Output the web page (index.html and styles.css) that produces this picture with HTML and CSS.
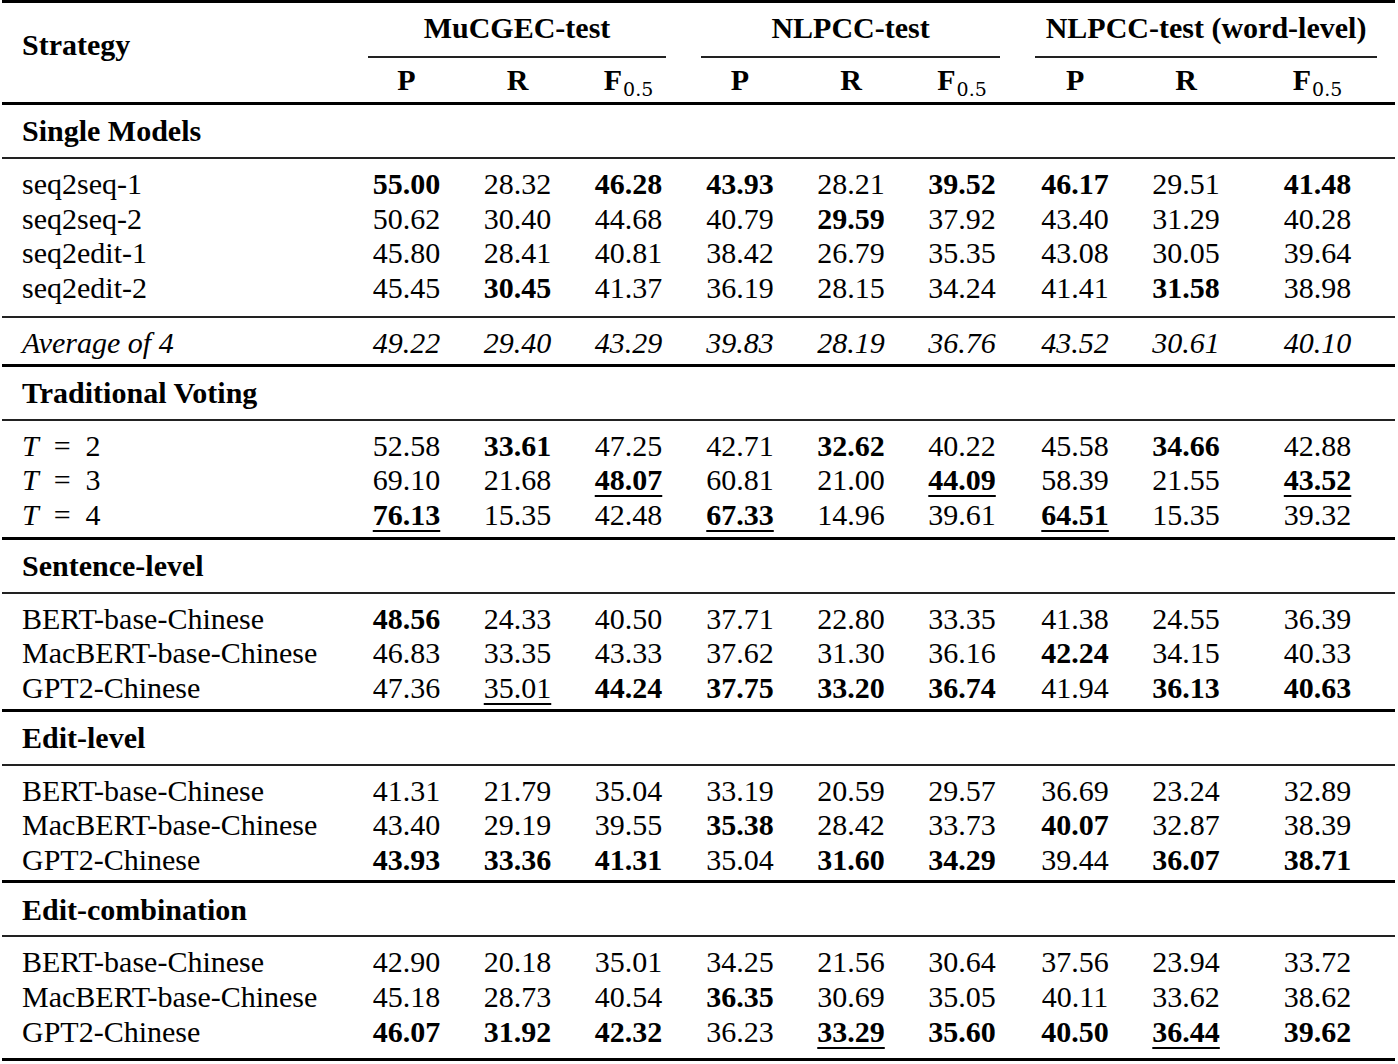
FILE: index.html
```html
<!DOCTYPE html>
<html lang="en">
<head>
    <meta charset="UTF-8">
    <meta name="viewport" content="width=device-width, initial-scale=1.0">
    <title>Ensemble Results</title>
    <link rel="stylesheet" href="styles.css">
</head>
<body>
    <table class="results">
        <colgroup>
            <col class="c-name">
            <col class="c-111"><col class="c-111"><col class="c-111">
            <col class="c-112"><col class="c-110"><col class="c-112">
            <col class="c-114"><col class="c-108"><col class="c-last">
        </colgroup>
        <thead>
            <tr class="head-1">
                <th rowspan="2" class="name strategy">Strategy</th>
                <th colspan="3"><div class="cmid">MuCGEC-test</div></th>
                <th colspan="3"><div class="cmid">NLPCC-test</div></th>
                <th colspan="3"><div class="cmid">NLPCC-test (word-level)</div></th>
            </tr>
            <tr class="head-2">
                <th>P</th><th>R</th><th>F<sub>0.5</sub></th>
                <th>P</th><th>R</th><th>F<sub>0.5</sub></th>
                <th>P</th><th>R</th><th>F<sub>0.5</sub></th>
            </tr>
        </thead>
        <tbody>
            <tr class="section"><td colspan="10" class="name">Single Models</td></tr>
            <tr class="first">
                <td class="name">seq2seq-1</td>
                <td><b>55.00</b></td><td>28.32</td><td><b>46.28</b></td>
                <td><b>43.93</b></td><td>28.21</td><td><b>39.52</b></td>
                <td><b>46.17</b></td><td>29.51</td><td><b>41.48</b></td>
            </tr>
            <tr>
                <td class="name">seq2seq-2</td>
                <td>50.62</td><td>30.40</td><td>44.68</td>
                <td>40.79</td><td><b>29.59</b></td><td>37.92</td>
                <td>43.40</td><td>31.29</td><td>40.28</td>
            </tr>
            <tr>
                <td class="name">seq2edit-1</td>
                <td>45.80</td><td>28.41</td><td>40.81</td>
                <td>38.42</td><td>26.79</td><td>35.35</td>
                <td>43.08</td><td>30.05</td><td>39.64</td>
            </tr>
            <tr class="last thin">
                <td class="name">seq2edit-2</td>
                <td>45.45</td><td><b>30.45</b></td><td>41.37</td>
                <td>36.19</td><td>28.15</td><td>34.24</td>
                <td>41.41</td><td><b>31.58</b></td><td>38.98</td>
            </tr>
            <tr class="average">
                <td class="name">Average of 4</td>
                <td>49.22</td><td>29.40</td><td>43.29</td>
                <td>39.83</td><td>28.19</td><td>36.76</td>
                <td>43.52</td><td>30.61</td><td>40.10</td>
            </tr>

            <tr class="section"><td colspan="10" class="name">Traditional Voting</td></tr>
            <tr class="first">
                <td class="name"><i>T</i>&nbsp;&nbsp;=&nbsp;&nbsp;2</td>
                <td>52.58</td><td><b>33.61</b></td><td>47.25</td>
                <td>42.71</td><td><b>32.62</b></td><td>40.22</td>
                <td>45.58</td><td><b>34.66</b></td><td>42.88</td>
            </tr>
            <tr>
                <td class="name"><i>T</i>&nbsp;&nbsp;=&nbsp;&nbsp;3</td>
                <td>69.10</td><td>21.68</td><td><b class="u">48.07</b></td>
                <td>60.81</td><td>21.00</td><td><b class="u">44.09</b></td>
                <td>58.39</td><td>21.55</td><td><b class="u">43.52</b></td>
            </tr>
            <tr class="last voting">
                <td class="name"><i>T</i>&nbsp;&nbsp;=&nbsp;&nbsp;4</td>
                <td><b class="u">76.13</b></td><td>15.35</td><td>42.48</td>
                <td><b class="u">67.33</b></td><td>14.96</td><td>39.61</td>
                <td><b class="u">64.51</b></td><td>15.35</td><td>39.32</td>
            </tr>

            <tr class="section"><td colspan="10" class="name">Sentence-level</td></tr>
            <tr class="first">
                <td class="name">BERT-base-Chinese</td>
                <td><b>48.56</b></td><td>24.33</td><td>40.50</td>
                <td>37.71</td><td>22.80</td><td>33.35</td>
                <td>41.38</td><td>24.55</td><td>36.39</td>
            </tr>
            <tr>
                <td class="name">MacBERT-base-Chinese</td>
                <td>46.83</td><td>33.35</td><td>43.33</td>
                <td>37.62</td><td>31.30</td><td>36.16</td>
                <td><b>42.24</b></td><td>34.15</td><td>40.33</td>
            </tr>
            <tr class="last">
                <td class="name">GPT2-Chinese</td>
                <td>47.36</td><td><span class="u">35.01</span></td><td><b>44.24</b></td>
                <td><b>37.75</b></td><td><b>33.20</b></td><td><b>36.74</b></td>
                <td>41.94</td><td><b>36.13</b></td><td><b>40.63</b></td>
            </tr>

            <tr class="section"><td colspan="10" class="name">Edit-level</td></tr>
            <tr class="first">
                <td class="name">BERT-base-Chinese</td>
                <td>41.31</td><td>21.79</td><td>35.04</td>
                <td>33.19</td><td>20.59</td><td>29.57</td>
                <td>36.69</td><td>23.24</td><td>32.89</td>
            </tr>
            <tr>
                <td class="name">MacBERT-base-Chinese</td>
                <td>43.40</td><td>29.19</td><td>39.55</td>
                <td><b>35.38</b></td><td>28.42</td><td>33.73</td>
                <td><b>40.07</b></td><td>32.87</td><td>38.39</td>
            </tr>
            <tr class="last">
                <td class="name">GPT2-Chinese</td>
                <td><b>43.93</b></td><td><b>33.36</b></td><td><b>41.31</b></td>
                <td>35.04</td><td><b>31.60</b></td><td><b>34.29</b></td>
                <td>39.44</td><td><b>36.07</b></td><td><b>38.71</b></td>
            </tr>

            <tr class="section"><td colspan="10" class="name">Edit-combination</td></tr>
            <tr class="first">
                <td class="name">BERT-base-Chinese</td>
                <td>42.90</td><td>20.18</td><td>35.01</td>
                <td>34.25</td><td>21.56</td><td>30.64</td>
                <td>37.56</td><td>23.94</td><td>33.72</td>
            </tr>
            <tr>
                <td class="name">MacBERT-base-Chinese</td>
                <td>45.18</td><td>28.73</td><td>40.54</td>
                <td><b>36.35</b></td><td>30.69</td><td>35.05</td>
                <td>40.11</td><td>33.62</td><td>38.62</td>
            </tr>
            <tr class="last bottom">
                <td class="name">GPT2-Chinese</td>
                <td><b>46.07</b></td><td><b>31.92</b></td><td><b>42.32</b></td>
                <td>36.23</td><td><b class="u">33.29</b></td><td><b>35.60</b></td>
                <td><b>40.50</b></td><td><b class="u">36.44</b></td><td><b>39.62</b></td>
            </tr>
        </tbody>
    </table>
</body>
</html>
```

FILE: styles.css
```css
body {
    margin: 0;
    background: #fff;
    color: #000;
    font-family: 'Liberation Serif', 'Times New Roman', serif;
}

.results {
    margin-left: 2px;
    width: 1393px;
    table-layout: fixed;
    border-collapse: separate;
    border-spacing: 0;
    font-size: 30px;
    line-height: 34.6px;
}

.c-name { width: 349px; }
.c-111 { width: 111px; }
.c-112 { width: 112px; }
.c-110 { width: 110px; }
.c-114 { width: 114px; }
.c-108 { width: 108px; }
.c-last { width: 155px; }

.results th,
.results td {
    padding: 0;
    text-align: center;
    white-space: nowrap;
    vertical-align: middle;
}

.results .name {
    text-align: left;
    padding-left: 20px;
}

/* header */
.head-1 th {
    border-top: 3px solid #000;
    padding-top: 8px;
    vertical-align: top;
}

.head-1 .strategy {
    vertical-align: middle;
    padding-top: 0;
    padding-bottom: 14px;
    border-bottom: 3px solid #000;
}

.cmid {
    margin: 0 18px 0 17px;
    padding-bottom: 10px;
    border-bottom: 2px solid #222;
}

.head-2 th {
    padding: 5px 0;
    border-bottom: 3px solid #000;
}

.head-2 sub {
    font-family: 'DejaVu Serif', serif;
    font-weight: normal;
    font-size: 19px;
    vertical-align: -6px;
    line-height: 0;
    margin-left: 1px;
}

/* section titles */
.section td {
    font-weight: bold;
    padding: 9.25px 0 8.25px;
    border-bottom: 2px solid #222;
}

.section td.name {
    padding-left: 20px;
}

/* body rows */
.first td {
    padding-top: 8px;
}

.last td {
    padding-bottom: 3px;
    border-bottom: 3px solid #000;
}

.last.voting td {
    padding-bottom: 4px;
}

.last.thin td {
    padding-bottom: 10.5px;
    border-bottom: 2px solid #222;
}

.last.bottom td {
    padding-bottom: 9px;
}

.average td {
    font-style: italic;
    padding: 8px 0 3px;
    border-bottom: 3px solid #000;
}

.u {
    text-decoration: underline;
    text-decoration-thickness: 2px;
    text-underline-offset: 5px;
}
```
